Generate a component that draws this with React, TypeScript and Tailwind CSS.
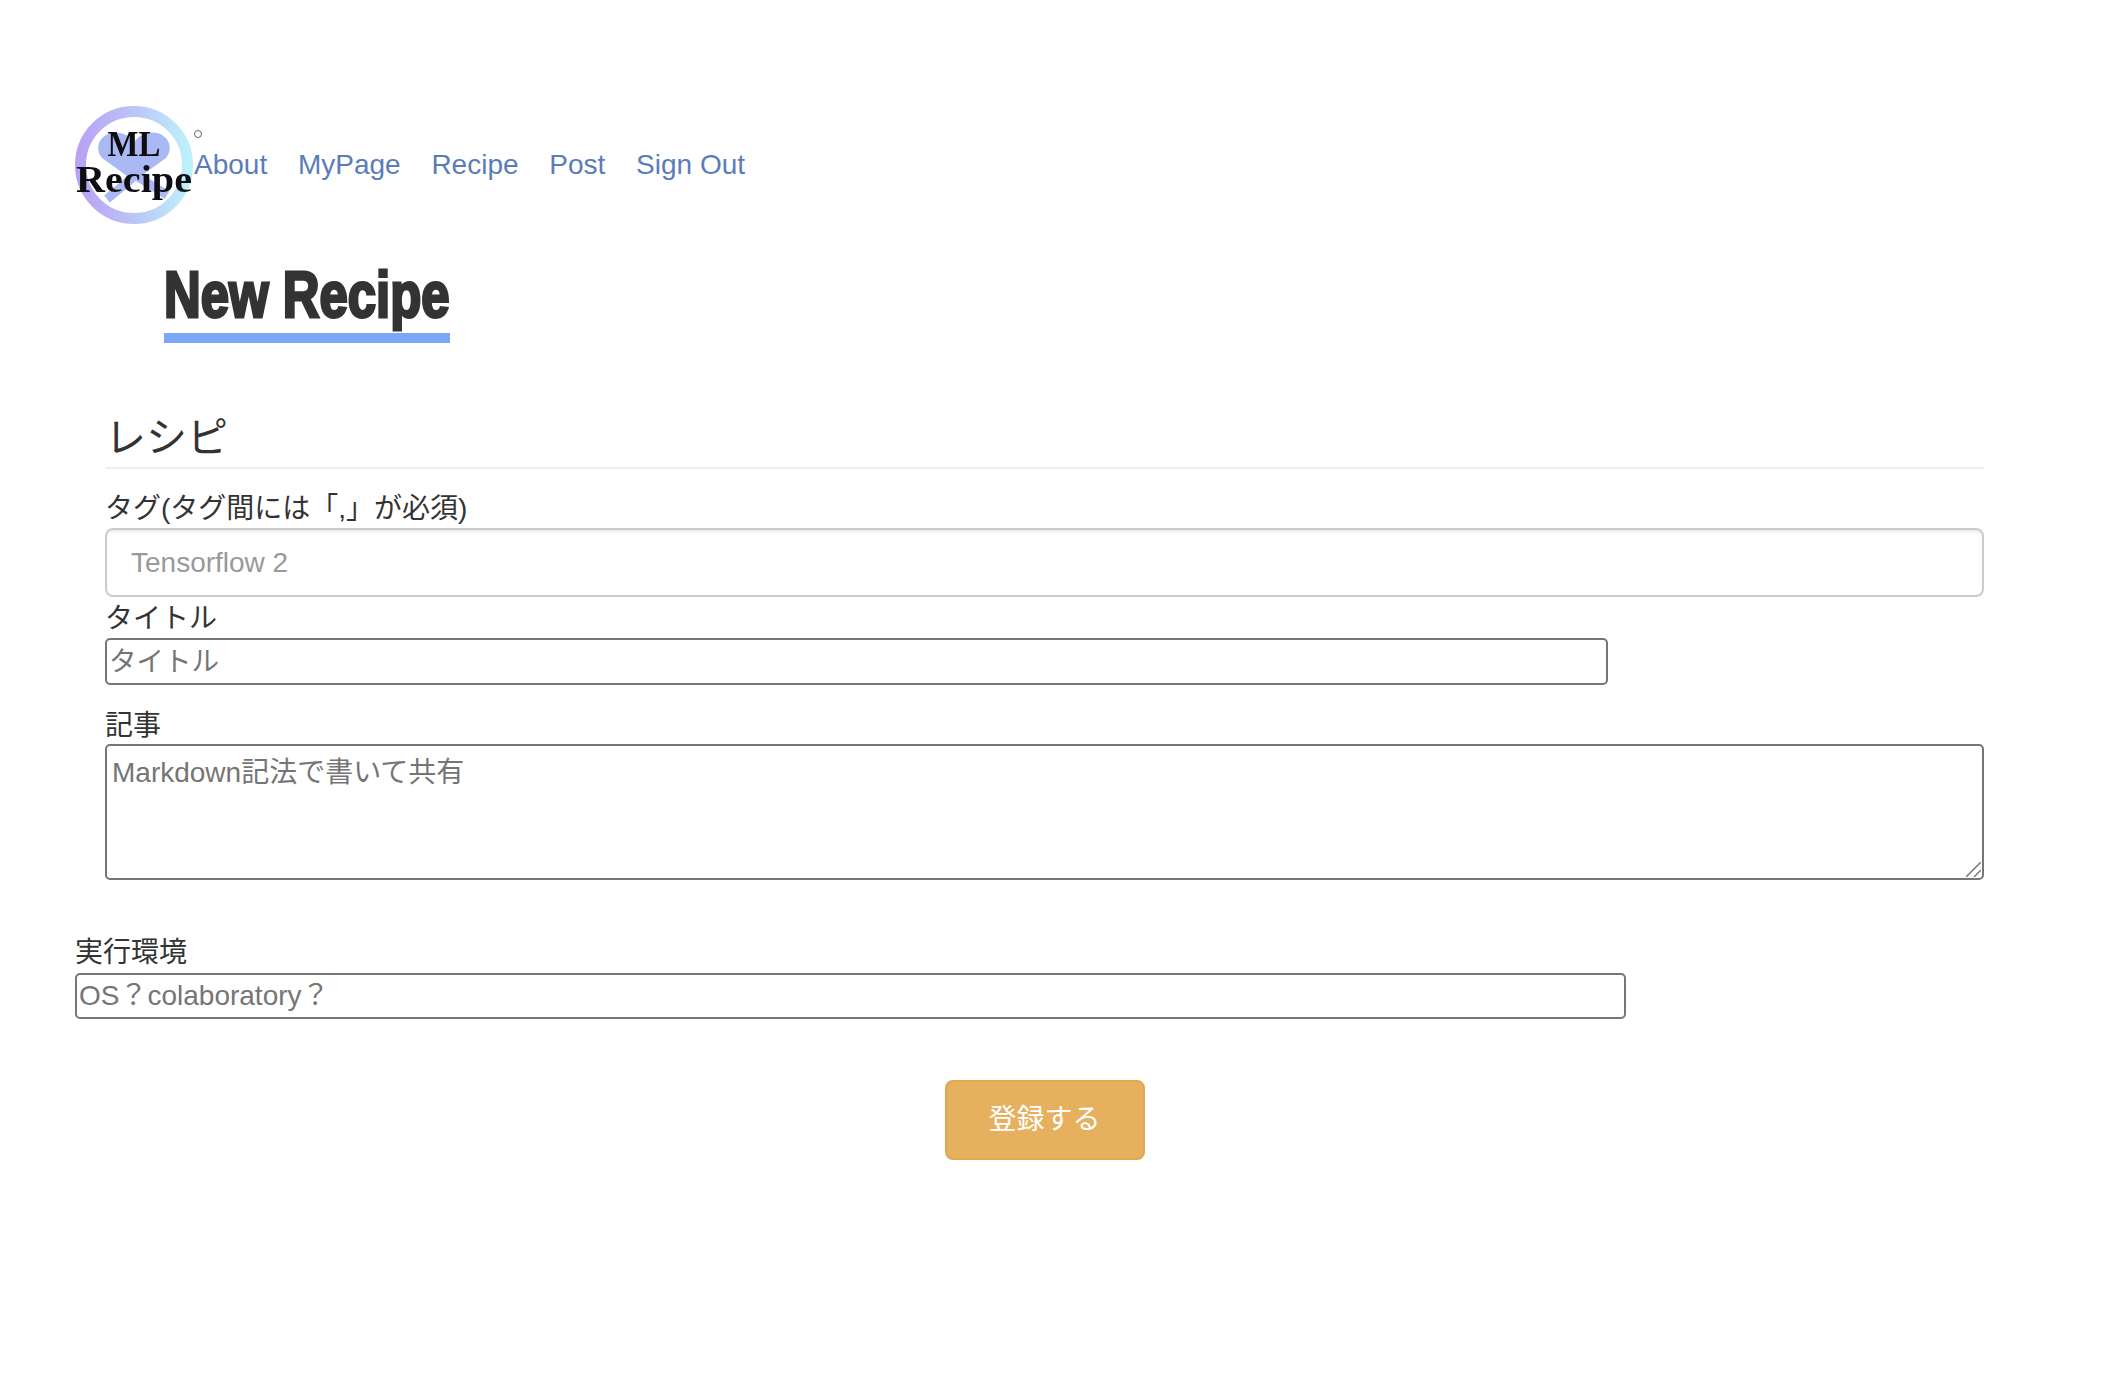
import React from 'react';

const navLinks = ['About', 'MyPage', 'Recipe', 'Post', 'Sign Out'];

const Logo: React.FC = () => (
  <svg viewBox="0 0 120 120" className="w-[120px] h-[120px] shrink-0 blur-[0.4px]">
    <defs>
      <linearGradient id="ring" x1="0" y1="0" x2="1" y2="0">
        <stop offset="0" stopColor="#b8a2f4" />
        <stop offset="0.5" stopColor="#bcc4f7" />
        <stop offset="1" stopColor="#bdf0fb" />
      </linearGradient>
    </defs>
    <circle cx="59" cy="60" r="53.5" fill="none" stroke="url(#ring)" strokeWidth="11" />
    {/* heart made of a crossed spoon and fork */}
    <path d="M59 38 C54 28 40 25 31 30 C22 35 21 46 27 53 L59 76 L91 53 C97 46 96 35 87 30 C78 25 64 28 59 38Z" fill="#aab9f3" />
    <path d="M50 64 L92 90 M68 64 L32 94" stroke="#aab9f3" strokeWidth="9" fill="none" />
    <text x="59" y="51" textAnchor="middle" textLength="53" lengthAdjust="spacingAndGlyphs" fontFamily="'Liberation Serif', serif" fontWeight="700" fontSize="35" fill="#0d0d12">ML</text>
    <text x="59" y="87" textAnchor="middle" textLength="116" lengthAdjust="spacingAndGlyphs" fontFamily="'Liberation Serif', serif" fontWeight="700" fontSize="38" fill="#0d0d12">Recipe</text>
  </svg>
);

const App: React.FC = () => {
  return (
    <div className="min-h-[1390px] bg-white pt-[105px] pl-[75px] text-[28px] leading-[40px] text-[#333] font-['Liberation_Sans','Noto_Sans_CJK_JP',sans-serif]">
      <header className="flex items-center">
        <Logo />
        <ul className="relative -ml-[1px] flex gap-[30.75px] text-[#5a7dba]">
          <span className="absolute left-0 -top-[15px] w-[8px] h-[8px] rounded-full border-[1.5px] border-[#666]"></span>
          {navLinks.map(link => (
            <li key={link}><a href="#">{link}</a></li>
          ))}
        </ul>
      </header>

      {/* no Impact here, so a bold sans squeezed and thickened stands in */}
      <h2 className="block w-[286px] ml-[89px] mt-[34px] pb-[2px] border-b-[10px] border-[#7ba7f5] text-[64px] leading-[72px] font-bold text-[#333] whitespace-nowrap">
        <span className="inline-block origin-left scale-x-[0.795] [-webkit-text-stroke:3px_#333]">New Recipe</span>
      </h2>

      <form className="mt-[64px]">
        <div className="ml-[30px] w-[1879px]">
          <h3 className="text-[41px] leading-[57px] pt-[3px] border-b-2 border-[#eee] mb-[20px]">レシピ</h3>

          <label className="block -mb-[1px]">タグ(タグ間には「,」が必須)</label>
          <input
            type="text"
            placeholder="Tensorflow 2"
            className="block w-full h-[69px] px-[24px] border-2 border-[#ccc] rounded-lg text-[28px] outline-none shadow-[inset_0_2px_2px_rgba(0,0,0,0.075)] placeholder:text-[#999]"
          />

          <label className="block mt-[2px]">タイトル</label>
          <input
            type="text"
            placeholder="タイトル"
            className="block w-[1503px] h-[47px] -mt-[1px] px-[2px] border-2 border-[#767676] rounded-[5px] text-[27.5px] outline-none placeholder:text-[#757575]"
          />

          <label className="block mt-[21px]">記事</label>
          <div className="relative -mt-[2px]">
            <textarea
              placeholder="Markdown記法で書いて共有"
              className="block w-full h-[136px] pl-[5px] pr-[6px] pt-[9px] pb-[4px] border-2 border-[#767676] rounded-[5px] text-[28px] leading-[36px] outline-none resize-none placeholder:text-[#757575]"
            />
            {/* resize grip */}
            <svg viewBox="0 0 15 15" className="absolute right-[3px] bottom-[3px] w-[15px] h-[15px]">
              <path d="M0 15 L15 0 M8 15 L15 8" stroke="#767676" strokeWidth="1.5" fill="none" />
            </svg>
          </div>
        </div>

        <label className="block mt-[53px]">実行環境</label>
        <input
          type="text"
          placeholder="OS？colaboratory？"
          className="block w-[1551px] h-[46px] px-[2px] border-2 border-[#767676] rounded-[5px] text-[28px] outline-none placeholder:text-[#757575]"
        />

        <div className="ml-[30px] w-[1879px] mt-[61px] flex justify-center">
          <button type="button" className="w-[200px] h-[80px] bg-[#e6b05e] border-2 border-[#e2a850] rounded-lg text-white text-[28px]">
            登録する
          </button>
        </div>
      </form>
    </div>
  );
};

export default App;
